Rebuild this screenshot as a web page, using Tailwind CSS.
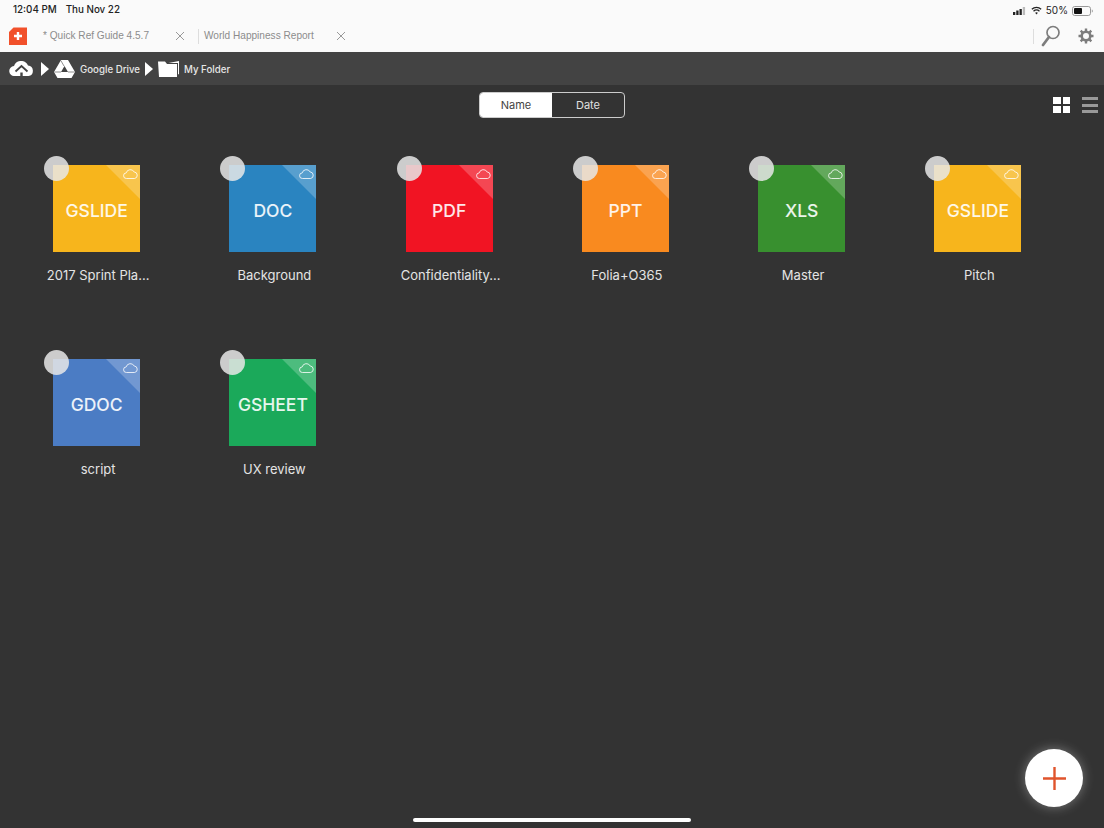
<!DOCTYPE html>
<html lang="en">
<head>
  <meta charset="UTF-8" />
  <title>Google Drive - My Folder</title>
  <script src="https://cdn.jsdelivr.net/npm/@tailwindcss/browser@4"></script>
</head>
<body class="w-[1104px] h-[828px] overflow-hidden relative bg-[#333333] font-['Inter','Liberation_Sans',sans-serif]">

  <!-- status bar + tabs -->
  <header class="h-[52px] bg-[#fafafa] flex flex-col">
    <div class="h-[20px] pt-[1px] flex items-center justify-between pl-[13px] pr-[11px] text-[9.800px] text-[#222222]">
      <div class="flex gap-[9px] font-medium"><span>12:04 PM</span><span>Thu Nov 22</span></div>
      <div class="flex items-center gap-[4px]">
        <svg class="mr-[1px]" width="13" height="8" viewBox="0 0 14 8" preserveAspectRatio="none"><rect x="0" y="5" width="2.500" height="3" fill="#222"/><rect x="3.500" y="3.500" width="2.500" height="4.500" fill="#222"/><rect x="7" y="2" width="2.500" height="6" fill="#222"/><rect x="10.500" y="0" width="2.500" height="8" fill="#bbb"/></svg>
        <svg width="11" height="9" viewBox="0 0 13 10" fill="none" stroke="#222" stroke-width="1.500"><path d="M1 3.600a8 8 0 0 1 11 0"/><path d="M3 5.800a5 5 0 0 1 7 0"/><path d="M6.500 9.600 4.900 7.800a2.400 2.400 0 0 1 3.200 0z" fill="#222" stroke="none"/></svg>
        <span class="text-[10px]">50%</span>
        <svg width="21" height="10" viewBox="0 0 21 10"><rect x="0.500" y="0.500" width="18" height="9" rx="2.200" fill="none" stroke="#999"/><rect x="2" y="2" width="8" height="6" rx="1" fill="#111"/><path d="M19.800 3.400c.8.300 1 .9 1 1.600s-.2 1.300-1 1.600z" fill="#999"/></svg>
      </div>
    </div>
    <div class="flex-1 flex items-center text-[10.100px] text-[#8c8c8c] font-['Liberation_Sans',sans-serif]">
      <svg class="ml-[9px]" width="18" height="18" viewBox="0 0 18 18"><path d="M4.500 0.500H18V18H0V5z" fill="#f1502a"/><path d="M9 5v8M5 9h8" stroke="#fff" stroke-width="2.400"/></svg>
      <span class="ml-[16px] w-[132px]">* Quick Ref Guide 4.5.7</span>
      <svg width="10" height="10" viewBox="0 0 10 10" stroke="#999" stroke-width="1"><path d="M1 1l8 8M9 1l-8 8"/></svg>
      <div class="ml-[13px] w-px h-[15px] bg-[#dddddd]"></div>
      <span class="ml-[5px] w-[132px]">World Happiness Report</span>
      <svg width="10" height="10" viewBox="0 0 10 10" stroke="#999" stroke-width="1"><path d="M1 1l8 8M9 1l-8 8"/></svg>
      <div class="ml-auto w-px h-[15px] bg-[#dddddd]"></div>
      <svg class="ml-[7px]" width="20" height="22" viewBox="0 0 20 22" fill="none" stroke="#7d7d7d"><circle cx="12" cy="7.500" r="6" stroke-width="1.700"/><path d="M8 12 2 20" stroke-width="2.800" stroke-linecap="round"/></svg>
      <svg class="ml-[17px] mr-[10px]" width="16" height="16" viewBox="0 0 16 16"><circle cx="8" cy="8" r="4.300" fill="none" stroke="#7d7d7d" stroke-width="2.600"/><path d="M8 0.500v3M8 12.500v3M0.500 8h3M12.500 8h3M2.700 2.700l2.100 2.100M11.200 11.200l2.100 2.100M2.700 13.300l2.100-2.100M11.200 4.800l2.100-2.100" stroke="#7d7d7d" stroke-width="2.400"/></svg>
    </div>
  </header>

  <!-- breadcrumb -->
  <nav class="h-[33px] bg-[#434343] flex items-center text-[9.700px] font-medium text-[#e6e6e6]">
    <svg class="ml-[9px]" width="25" height="15" viewBox="0 0 25 15"><path d="M5.500 15A5 5 0 0 1 5 5 7.500 7.500 0 0 1 19 4.500 5.300 5.300 0 0 1 19.500 15z" fill="#fff"/><path d="M6.500 10.500 12.500 5l6 5.500" fill="none" stroke="#434343" stroke-width="1.800"/><path d="M11.300 15v-3.500h2.400V15z" fill="#434343"/></svg>
    <svg class="ml-[7px]" width="8" height="14" viewBox="0 0 8 14"><path d="M0 0l8 7-8 7z" fill="#fff"/></svg>
    <svg class="ml-[5px]" width="21" height="18" viewBox="0 0 21 18"><path fill-rule="evenodd" d="M7 0h7l7 12-3.500 6h-14L0 12zM10.500 6 7 12h7z" fill="#fff"/><path d="M6.800 .5 10 6M7 12H.5M14 12h6.500" stroke="#434343" stroke-width="0.600"/></svg>
    <span class="ml-[5px] mt-[3px]">Google Drive</span>
    <svg class="ml-[5px]" width="8" height="14" viewBox="0 0 8 14"><path d="M0 0l8 7-8 7z" fill="#fff"/></svg>
    <svg class="ml-[5px]" width="21" height="16" viewBox="0 0 21 16" fill="#fff"><path d="M0 0.500h7l2 2.500h10v13H1z"/><path d="M10.500 2 21 0v13l-1 .500V2z"/></svg>
    <span class="ml-[5px] mt-[3px]">My Folder</span>
  </nav>

  <!-- sort + view switch -->
  <div class="relative h-[40px] flex items-center justify-center">
    <div class="flex w-[146px] h-[26px] border border-[#cccccc] rounded-[4px] overflow-hidden text-[11px]">
      <div class="w-[72px] bg-white text-[#444444] flex items-center justify-center">Name</div>
      <div class="flex-1 text-[#e0e0e0] flex items-center justify-center">Date</div>
    </div>
    <div class="absolute right-[6px] top-[12px] flex items-center gap-[12px]">
      <div class="grid grid-cols-2 gap-[2px] w-[17px]">
        <div class="h-[7px] bg-white"></div><div class="h-[7px] bg-white"></div>
        <div class="h-[7px] bg-white"></div><div class="h-[7px] bg-white"></div>
      </div>
      <div class="flex flex-col gap-[3.500px] w-[16px]">
        <div class="h-[3px] bg-[#999999]"></div><div class="h-[3px] bg-[#999999]"></div><div class="h-[3px] bg-[#999999]"></div>
      </div>
    </div>
  </div>

  <!-- files -->
  <main id="files" class="ml-[10px] mt-[40px] grid grid-cols-[repeat(6,176.250px)] auto-rows-[194px]"></main>

  <!-- add button -->
  <button class="absolute left-[1025px] top-[749px] w-[58px] h-[58px] rounded-full bg-white shadow-[0_0_12px_rgba(255,255,255,0.350)] flex items-center justify-center">
    <svg width="23" height="23" viewBox="0 0 23 23" stroke="#e0542c" stroke-width="2.400"><path d="M11.500 0v23M0 11.500h23"/></svg>
  </button>

  <!-- home indicator -->
  <div class="absolute left-[413px] top-[818px] w-[278px] h-[3.500px] rounded-full bg-white"></div>

  <script>
    const files = [
      { type: "GSLIDE", name: "2017 Sprint Pla...", color: "bg-[#f7b51c]" },
      { type: "DOC", name: "Background", color: "bg-[#2a84c0]" },
      { type: "PDF", name: "Confidentiality...", color: "bg-[#f11423]" },
      { type: "PPT", name: "Folia+O365", color: "bg-[#f98a1f]" },
      { type: "XLS", name: "Master", color: "bg-[#38902f]" },
      { type: "GSLIDE", name: "Pitch", color: "bg-[#f7b51c]" },
      { type: "GDOC", name: "script", color: "bg-[#4b7cc4]" },
      { type: "GSHEET", name: "UX review", color: "bg-[#1ba95a]" }
    ];

    document.getElementById("files").innerHTML = files.map(f => `
      <div class="flex flex-col items-center">
        <div class="relative w-[87px] h-[87px] mr-[3px] ${f.color} flex items-center justify-center">
          <svg class="absolute right-0 top-0" width="34" height="34" viewBox="0 0 34 34"><path d="M0 0h34v34z" fill="#fff" fill-opacity="0.220"/></svg>
          <svg class="absolute right-[2px] top-[4px]" width="15" height="10" viewBox="0 0 15 10" fill="none" stroke="#fff" stroke-opacity="0.800" stroke-width="1"><path d="M3.500 9.500a2.800 2.800 0 0 1-.3-5.600 4.300 4.300 0 0 1 8-.9 3.300 3.300 0 0 1 .5 6.500z"/></svg>
          <span class="pt-[6px] text-[17.500px] font-medium text-white/90">${f.type}</span>
          <div class="absolute -left-[9px] -top-[9px] w-[25px] h-[25px] rounded-full bg-[#e8e8e8]/85"></div>
        </div>
        <span class="mt-[14px] text-[13px] leading-[18px] text-[#e4e4e4]">${f.name}</span>
      </div>`).join("");
  </script>
</body>
</html>
